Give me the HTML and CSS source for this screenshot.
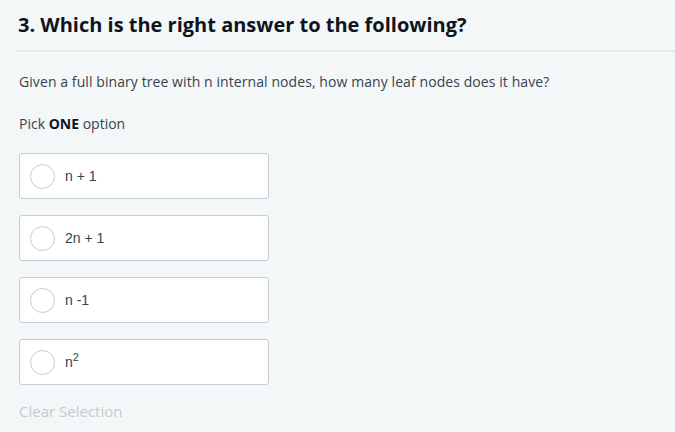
FILE: index.html
```html
<!DOCTYPE html>
<html>
<head>
<meta charset="utf-8">
<link rel="stylesheet" href="styles.css">
</head>
<body>
<div class="page">
  <h1 class="title">3. Which is the right answer to the following?</h1>
  <div class="rule"></div>
  <p class="question">Given a full binary tree with n internal nodes, how many leaf nodes does it have?</p>
  <p class="pick">Pick <b>ONE</b> option</p>
  <div class="options">
    <label class="option"><span class="radio"></span><span class="opt-text">n + 1</span></label>
    <label class="option"><span class="radio"></span><span class="opt-text">2n + 1</span></label>
    <label class="option"><span class="radio"></span><span class="opt-text">n -1</span></label>
    <label class="option"><span class="radio"></span><span class="opt-text">n<sup class="sup">2</sup></span></label>
  </div>
  <div class="clear">Clear Selection</div>
</div>
</body>
</html>
```
FILE: styles.css
```css
html, body {
  margin: 0;
  padding: 0;
  background: #f3f7f7;
}
.page {
  padding: 0 0 0 19px;
  font-family: "Open Sans", sans-serif;
  color: #39424e;
}
.title {
  margin: 0;
  padding-top: 12px;
  font-size: 20px;
  line-height: 26px;
  font-weight: 700;
  color: #0e141e;
  margin-left: -1px;
}
.rule {
  height: 2px;
  background: #e5ecee;
  margin-top: 12px;
  margin-left: -4px;
}
.question {
  margin: 20px 0 0 0;
  font-size: 14px;
  line-height: 20px;
  letter-spacing: 0.08px;
}
.pick {
  margin: 22px 0 0 0;
  font-size: 14px;
  line-height: 20px;
}
.pick b {
  color: #0e141e;
}
.options {
  margin-top: 19px;
  display: flex;
  flex-direction: column;
  gap: 16px;
}
.option {
  box-sizing: border-box;
  width: 250px;
  height: 46px;
  background: #fff;
  border: 1px solid #c2ced3;
  border-radius: 3px;
  display: flex;
  align-items: center;
  padding-left: 10px;
}
.radio {
  box-sizing: border-box;
  width: 25px;
  height: 25px;
  border: 1px solid #c2ced3;
  border-radius: 50%;
  flex: none;
}
.opt-text {
  margin-left: 10px;
  font-family: "Liberation Sans", Arial, sans-serif;
  font-size: 14px;
  color: #39424e;
}
.sup {
  font-size: 11px;
  vertical-align: 6px;
  line-height: 0;
}
.clear {
  margin-top: 16px;
  font-size: 15px;
  line-height: 20px;
  color: #c2ccd1;
}
```
